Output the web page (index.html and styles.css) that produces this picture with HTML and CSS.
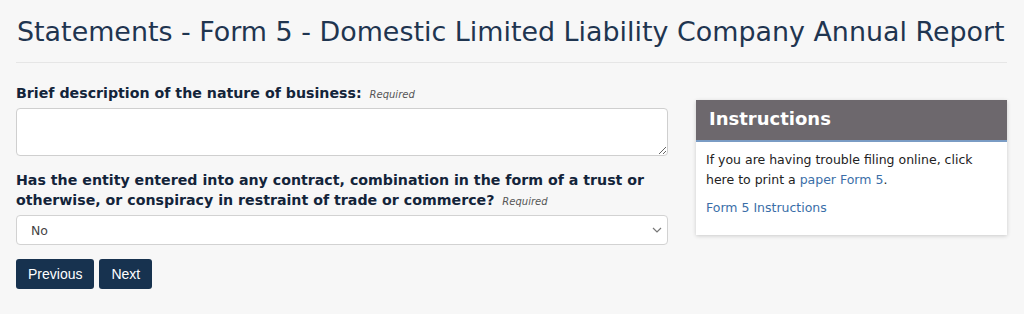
FILE: index.html
```html
<!DOCTYPE html>
<html lang="en">
<head>
    <meta charset="UTF-8">
    <meta name="viewport" content="width=device-width, initial-scale=1.0">
    <title>Form 5 Statements</title>
    <link rel="stylesheet" href="styles.css">
</head>
<body>
    <div class="page">
        <h1 class="page-title">Statements - Form 5 - Domestic Limited Liability Company Annual Report</h1>
        <div class="layout">
            <!-- form fields -->
            <form class="form-col">
                <div class="field">
                    <label class="field-label" for="nature">Brief description of the nature of business: <span class="req">Required</span></label>
                    <textarea id="nature" class="text-box"></textarea>
                </div>
                <div class="field">
                    <label class="field-label" for="restraint">Has the entity entered into any contract, combination in the form of a trust or otherwise, or conspiracy in restraint of trade or commerce? <span class="req">Required</span></label>
                    <div class="select-wrap">
                        <select id="restraint" class="select-box">
                            <option>No</option>
                            <option>Yes</option>
                        </select>
                        <svg class="chevron" width="10" height="6" viewBox="0 0 10 6"><path d="M1 1l4 4 4-4" fill="none" stroke="#777" stroke-width="1.2"/></svg>
                    </div>
                </div>
                <div class="buttons">
                    <button type="button" class="btn">Previous</button>
                    <button type="button" class="btn">Next</button>
                </div>
            </form>
            <!-- instructions sidebar -->
            <aside class="panel">
                <div class="panel-head">Instructions</div>
                <div class="panel-body">
                    <p>If you are having trouble filing online, click here to print a <a href="#">paper Form 5</a>.</p>
                    <p><a href="#">Form 5 Instructions</a></p>
                </div>
            </aside>
        </div>
    </div>
</body>
</html>
```

FILE: styles.css
```css
/* base */
body {
    margin: 0;
    background-color: #f7f7f7;
    font-family: "DejaVu Sans", Verdana, sans-serif;
    color: #1c2f45;
}

.page {
    padding: 0 16px;
}

.page-title {
    margin: 0 1px 0 0;
    padding: 16px 0 14px 1px;
    font-size: 26.9px;
    font-weight: normal;
    line-height: 32px;
    white-space: nowrap;
    color: #1f3550;
    border-bottom: 1px solid #e6e6e6;
}

.layout {
    display: grid;
    grid-template-columns: 652px 311px;
    column-gap: 28px;
    padding-top: 20px;
}

/* form */
.field {
    margin-bottom: 14px;
}

.field-label {
    display: block;
    font-size: 14.2px;
    font-weight: bold;
    line-height: 20px;
    color: #13243a;
    margin-bottom: 5px;
}

.req {
    font-size: 10px;
    font-weight: normal;
    font-style: italic;
    line-height: 1;
    color: #555;
    margin-left: 3px;
}

.text-box {
    display: block;
    box-sizing: border-box;
    width: 100%;
    height: 48px;
    margin: 0;
    border: 1px solid #cfcfcf;
    border-radius: 4px;
    background: #fff;
}

.select-wrap {
    position: relative;
}

.select-box {
    display: block;
    box-sizing: border-box;
    width: 100%;
    height: 30px;
    padding: 0 14px;
    border: 1px solid #d2d2d2;
    border-radius: 4px;
    background: #fff;
    font-family: "DejaVu Sans", sans-serif;
    font-size: 12.5px;
    color: #444;
    appearance: none;
    -webkit-appearance: none;
}

.chevron {
    position: absolute;
    right: 6px;
    top: 12px;
}

.buttons {
    display: flex;
    gap: 5px;
}

.btn {
    height: 30px;
    padding: 0 12px;
    border: none;
    border-radius: 3px;
    background-color: #17324f;
    color: #fff;
    font-family: "Liberation Sans", Arial, sans-serif;
    font-size: 14px;
    cursor: pointer;
}

/* sidebar */
.panel {
    margin-top: 17px;
    align-self: start;
    background: #fff;
    box-shadow: 0 1px 4px rgba(0, 0, 0, 0.18);
}

.panel-head {
    box-sizing: border-box;
    height: 42px;
    line-height: 38px;
    padding: 0 13px;
    background-color: #6d686d;
    border-bottom: 2px solid #7a9cc4;
    color: #fff;
    font-size: 18px;
    font-weight: bold;
}

.panel-body {
    padding: 8px 10px 9px 10px;
    font-size: 12.5px;
    line-height: 20px;
    color: #222;
}

.panel-body p {
    margin: 0 0 8px 0;
}

.panel-body a {
    color: #3a6ea8;
    text-decoration: none;
}
```
